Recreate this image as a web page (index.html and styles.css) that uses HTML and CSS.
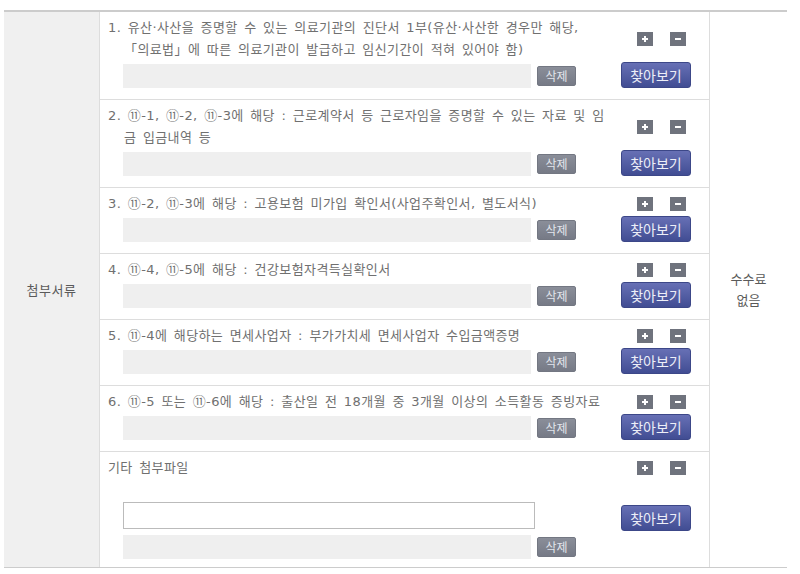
FILE: index.html
```html
<!DOCTYPE html>
<html>
<head>
    <meta charset="utf-8">
    <link rel="stylesheet" href="styles.css">
</head>
<body>
    <div class="board">
        <div class="board-head">첨부서류</div>
        <div class="board-body">
            <div class="doc-row">
                <div class="doc-text">1. 유산·사산을 증명할 수 있는 의료기관의 진단서 1부(유산·사산한 경우만 해당, 「의료법」에 따른 의료기관이 발급하고 임신기간이 적혀 있어야 함)</div>
                <div class="doc-icons"><span class="icon-btn plus"></span><span class="icon-btn minus"></span></div>
                <div class="doc-file"><input type="text" class="file-name" readonly><button class="btn-del">삭제</button></div>
                <button class="btn-find">찾아보기</button>
            </div>
            <div class="doc-row">
                <div class="doc-text">2. ⑪-1, ⑪-2, ⑪-3에 해당 : 근로계약서 등 근로자임을 증명할 수 있는 자료 및 임금 입금내역 등</div>
                <div class="doc-icons"><span class="icon-btn plus"></span><span class="icon-btn minus"></span></div>
                <div class="doc-file"><input type="text" class="file-name" readonly><button class="btn-del">삭제</button></div>
                <button class="btn-find">찾아보기</button>
            </div>
            <div class="doc-row">
                <div class="doc-text">3. ⑪-2, ⑪-3에 해당 : 고용보험 미가입 확인서(사업주확인서, 별도서식)</div>
                <div class="doc-icons"><span class="icon-btn plus"></span><span class="icon-btn minus"></span></div>
                <div class="doc-file"><input type="text" class="file-name" readonly><button class="btn-del">삭제</button></div>
                <button class="btn-find">찾아보기</button>
            </div>
            <div class="doc-row">
                <div class="doc-text">4. ⑪-4, ⑪-5에 해당 : 건강보험자격득실확인서</div>
                <div class="doc-icons"><span class="icon-btn plus"></span><span class="icon-btn minus"></span></div>
                <div class="doc-file"><input type="text" class="file-name" readonly><button class="btn-del">삭제</button></div>
                <button class="btn-find">찾아보기</button>
            </div>
            <div class="doc-row">
                <div class="doc-text">5. ⑪-4에 해당하는 면세사업자 : 부가가치세 면세사업자 수입금액증명</div>
                <div class="doc-icons"><span class="icon-btn plus"></span><span class="icon-btn minus"></span></div>
                <div class="doc-file"><input type="text" class="file-name" readonly><button class="btn-del">삭제</button></div>
                <button class="btn-find">찾아보기</button>
            </div>
            <div class="doc-row">
                <div class="doc-text">6. ⑪-5 또는 ⑪-6에 해당 : 출산일 전 18개월 중 3개월 이상의 소득활동 증빙자료</div>
                <div class="doc-icons"><span class="icon-btn plus"></span><span class="icon-btn minus"></span></div>
                <div class="doc-file"><input type="text" class="file-name" readonly><button class="btn-del">삭제</button></div>
                <button class="btn-find">찾아보기</button>
            </div>
            <div class="doc-row doc-etc">
                <div class="doc-text">기타 첨부파일</div>
                <div class="doc-icons"><span class="icon-btn plus"></span><span class="icon-btn minus"></span></div>
                <div class="doc-upload"><input type="text" class="file-input"></div>
                <button class="btn-find btn-upload">찾아보기</button>
                <div class="doc-file"><input type="text" class="file-name" readonly><button class="btn-del">삭제</button></div>
            </div>
        </div>
        <div class="board-fee">수수료<br>없음</div>
    </div>
</body>
</html>
```

FILE: styles.css
```css
body {
    margin: 0;
    padding: 0;
    background-color: #FFF;
    font-family: 'DejaVu Sans', 'Noto Sans CJK KR', sans-serif;
    font-size: 13px;
    color: #707070;
}
.board {
    display: flex;
    width: 783px;
    margin: 10px 0 0 4px;
    border-top: 2px solid #CCC;
    border-bottom: 1px solid #CCC;
}
.board-head {
    width: 95px;
    display: flex;
    align-items: center;
    justify-content: center;
    background-color: #F0F0F0;
    border-right: 1px solid #DDD;
    color: #5A5A5A;
    letter-spacing: 0.6px;
}
.board-body {
    width: 609px;
    border-right: 1px solid #DDD;
}
.board-fee {
    flex: 1;
    display: flex;
    align-items: center;
    justify-content: center;
    text-align: center;
    line-height: 21px;
    color: #5A5A5A;
}
.doc-row {
    display: grid;
    grid-template-columns: 502px 70px;
    column-gap: 11px;
    row-gap: 1px;
    padding: 5px 18px 11px 8px;
    border-bottom: 1px solid #DDD;
}
.doc-text {
    line-height: 22px;
    padding-left: 16px;
    text-indent: -16px;
    letter-spacing: 0.4px;
    word-spacing: 2px;
}
.doc-icons {
    display: flex;
    align-items: center;
    gap: 17px;
    padding-left: 16px;
}
.icon-btn {
    position: relative;
    width: 16px;
    height: 14px;
    background-color: #6F737D;
}
.icon-btn::before,
.icon-btn::after {
    content: '';
    position: absolute;
    background-color: #FFF;
}
.plus::before {
    left: 5px;
    top: 6px;
    width: 6px;
    height: 2px;
}
.plus::after {
    left: 7px;
    top: 4px;
    width: 2px;
    height: 6px;
}
.minus::before {
    left: 5px;
    top: 6px;
    width: 6px;
    height: 2px;
}
.minus::after {
    display: none;
}
.doc-file {
    align-self: end;
    display: flex;
    align-items: center;
    gap: 6px;
    padding-left: 15px;
}
.file-name {
    width: 408px;
    height: 24px;
    margin: 0;
    padding: 0 6px;
    box-sizing: border-box;
    border: none;
    background-color: #EFEFEF;
    font-family: inherit;
}
.btn-del {
    width: 39px;
    height: 20px;
    margin: 0;
    padding: 0;
    border: 1px solid #737782;
    border-radius: 2px;
    background: linear-gradient(#8A8E99, #767A86);
    color: #E2E5EC;
    font-family: 'Noto Sans CJK KR', sans-serif;
    font-size: 12px;
    line-height: 18px;
}
.btn-find {
    align-self: end;
    width: 70px;
    height: 26px;
    margin: 0;
    padding: 0;
    border: 1px solid #3C4788;
    border-radius: 3px;
    background: linear-gradient(#6770B5, #414D93);
    color: #EDEFF8;
    font-family: 'Noto Sans CJK KR', sans-serif;
    font-size: 14px;
    line-height: 24px;
}

/* 기타 첨부파일 */
.doc-etc {
    row-gap: 0;
    padding-bottom: 8px;
    border-bottom: none;
}
.doc-upload {
    align-self: start;
    padding-left: 15px;
    margin-top: 23px;
}
.file-input {
    display: block;
    width: 412px;
    height: 27px;
    margin: 0;
    box-sizing: border-box;
    border: 1px solid #BBB;
    background-color: #FFF;
    font-family: inherit;
}
.btn-upload {
    align-self: start;
    margin-top: 26px;
}
.doc-etc .doc-file {
    margin-top: 4px;
}
```
